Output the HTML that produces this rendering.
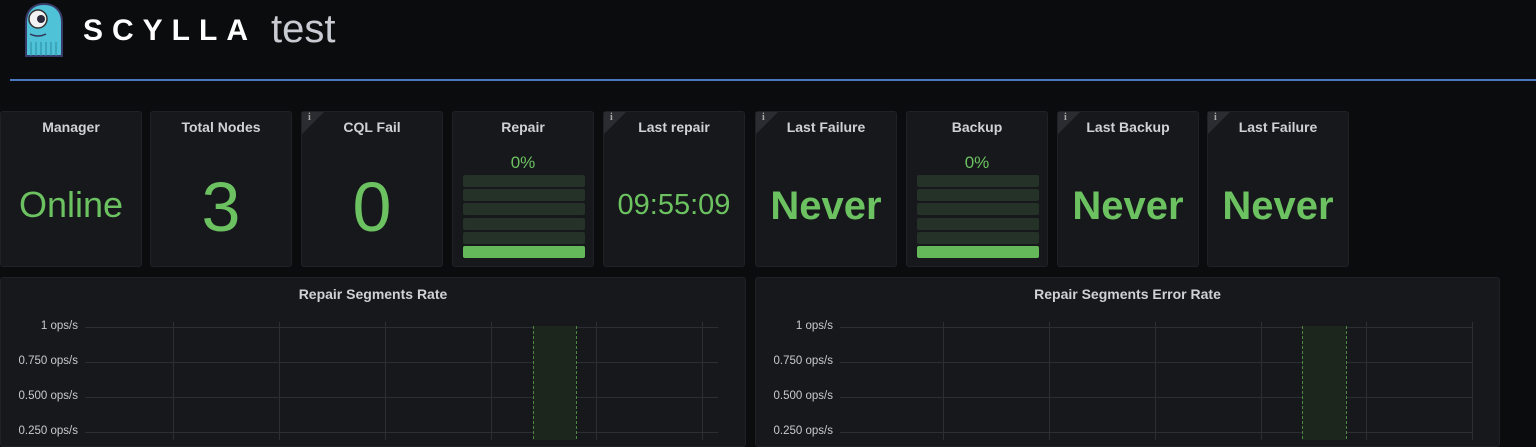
<!DOCTYPE html>
<html><head><style>
body{margin:0;width:1536px;height:440px;background:#0b0c0e;overflow:hidden;font-family:"Liberation Sans",sans-serif;position:relative}
.p{position:absolute;top:111px;width:142px;height:156px;background:#16181c;border:1px solid #1f2126;border-radius:3px;box-sizing:border-box}
.t{position:absolute;top:7px;left:0;right:0;text-align:center;color:#cfd1d6;font-size:14px;font-weight:bold}
.v{position:absolute;left:0;right:0;text-align:center;color:#6cc260}
.i{position:absolute;left:0;top:0;width:0;height:0;border-top:22px solid #2a2c31;border-right:22px solid transparent}
.i:after{content:"i";position:absolute;left:6px;top:-22px;color:#aaa;font-size:10px;font-family:"Liberation Serif",serif;font-weight:bold}
.g{position:absolute;top:277px;height:170px;background:#16181c;border:1px solid #1f2126;border-radius:3px;box-sizing:border-box}
.bar{position:absolute;left:10px;width:122px;height:12px;background:#253227;border-radius:2px}
.lab{position:absolute;color:#c8cad0;font-size:11.5px;text-align:right;width:78px}
</style></head><body>
<svg style="position:absolute;left:22px;top:2px" width="44" height="56" viewBox="0 0 44 56">
<path d="M4 20C4 8 12 2 22 2S40 8 40 20V54H4Z" fill="#4fc2d8" stroke="#3a3a6a" stroke-width="2"/>
<circle cx="16" cy="17" r="9" fill="#f2f2f2" stroke="#333" stroke-width="1.5"/>
<circle cx="19" cy="17" r="4" fill="#2a2a3a"/>
<path d="M8 32Q16 36 24 32" stroke="#335" stroke-width="1.5" fill="none"/>
<path d="M9 40V54M14 40V54M19 40V54M24 40V54M29 40V54M34 40V54" stroke="#2a8aa0" stroke-width="1"/>
</svg>
<div style="position:absolute;left:83px;top:14px;color:#fff;font-size:30px;font-weight:bold;letter-spacing:9px">SCYLLA</div>
<div style="position:absolute;left:271px;top:7px;color:#c8ccd2;font-size:40px">test</div>
<div style="position:absolute;left:10px;top:79px;width:1526px;height:2px;background:#4a78c0"></div>

<div class="p" style="left:0"><div class="t">Manager</div><div class="v" style="top:72px;font-size:36px">Online</div></div>
<div class="p" style="left:150px"><div class="t">Total Nodes</div><div class="v" style="top:55px;font-size:70px">3</div></div>
<div class="p" style="left:301px"><div class="i"></div><div class="t">CQL Fail</div><div class="v" style="top:55px;font-size:70px">0</div></div>
<div class="p" style="left:452px"><div class="t">Repair</div><div class="v" style="top:41px;font-size:17px">0%</div>
<div class="bar" style="top:63px"></div><div class="bar" style="top:77px"></div><div class="bar" style="top:91px"></div><div class="bar" style="top:106px"></div><div class="bar" style="top:120px"></div><div class="bar" style="top:134px;background:#64b85a"></div></div>
<div class="p" style="left:603px"><div class="i"></div><div class="t">Last repair</div><div class="v" style="top:77px;font-size:29px">09:55:09</div></div>
<div class="p" style="left:755px"><div class="i"></div><div class="t">Last Failure</div><div class="v" style="top:72px;font-size:40px;font-weight:bold">Never</div></div>
<div class="p" style="left:906px"><div class="t">Backup</div><div class="v" style="top:41px;font-size:17px">0%</div>
<div class="bar" style="top:63px"></div><div class="bar" style="top:77px"></div><div class="bar" style="top:91px"></div><div class="bar" style="top:106px"></div><div class="bar" style="top:120px"></div><div class="bar" style="top:134px;background:#64b85a"></div></div>
<div class="p" style="left:1057px"><div class="i"></div><div class="t">Last Backup</div><div class="v" style="top:72px;font-size:40px;font-weight:bold">Never</div></div>
<div class="p" style="left:1207px"><div class="i"></div><div class="t">Last Failure</div><div class="v" style="top:72px;font-size:40px;font-weight:bold">Never</div></div>

<div class="g" style="left:0;width:746px"><div class="t" style="top:8px">Repair Segments Rate</div></div>
<div class="g" style="left:755px;width:745px"><div class="t" style="top:8px">Repair Segments Error Rate</div></div>

<svg style="position:absolute;left:0;top:0" width="1536" height="440">
<g stroke="#2c2e33" stroke-width="1">
<path d="M85 327.5H718M85 362.5H718M85 397.5H718M85 432.5H718"/>
<path d="M173.5 322V440M279.5 322V440M385.5 322V440M491.5 322V440M596.5 322V440M702.5 322V440"/>
<path d="M840 327.5H1472M840 362.5H1472M840 397.5H1472M840 432.5H1472"/>
<path d="M943.5 322V440M1049.5 322V440M1155.5 322V440M1261.5 322V440M1366.5 322V440M1472.5 322V440"/>
</g>
<rect x="533" y="326" width="43" height="114" fill="#1c261d"/>
<rect x="1302" y="326" width="44" height="114" fill="#1c261d"/>
<g stroke="#4c8a44" stroke-dasharray="3,2"><path d="M533.5 326V440M576.5 326V440M1302.5 326V440M1346.5 326V440"/></g>
</svg>
<div class="lab" style="left:0;top:320px">1 ops/s</div>
<div class="lab" style="left:0;top:355px">0.750 ops/s</div>
<div class="lab" style="left:0;top:390px">0.500 ops/s</div>
<div class="lab" style="left:0;top:425px">0.250 ops/s</div>
<div class="lab" style="left:755px;top:320px">1 ops/s</div>
<div class="lab" style="left:755px;top:355px">0.750 ops/s</div>
<div class="lab" style="left:755px;top:390px">0.500 ops/s</div>
<div class="lab" style="left:755px;top:425px">0.250 ops/s</div>
</body></html>
